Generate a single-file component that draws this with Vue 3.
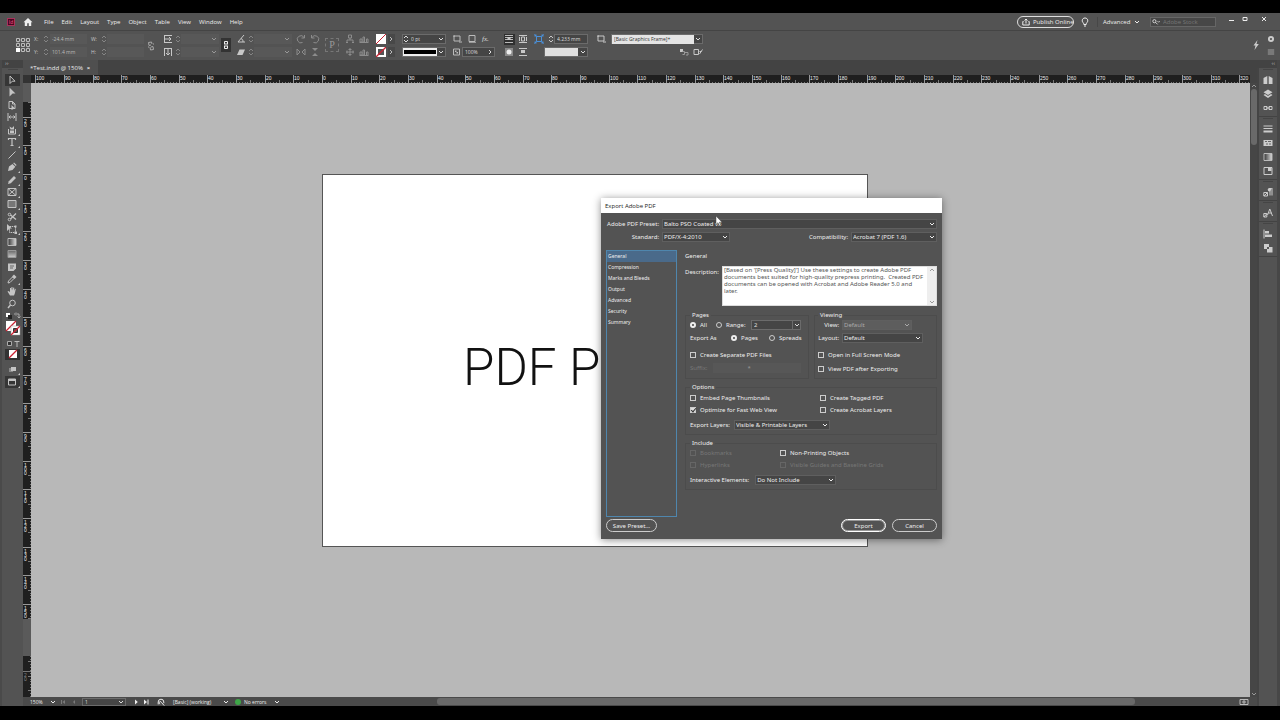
<script setup>
import { ref } from 'vue'

const menus = ['File', 'Edit', 'Layout', 'Type', 'Object', 'Table', 'View', 'Window', 'Help']

const tools = [
  { id: 'select', active: true }, { id: 'direct' }, { id: 'page' }, { id: 'gap' },
  { id: 'collect', more: true }, { id: 'type', more: true }, { id: 'line' }, { id: 'pen', more: true },
  { id: 'pencil', more: true }, { id: 'frame', more: true }, { id: 'rect', more: true }, { id: 'scissors' },
  { id: 'transform', more: true }, { id: 'gradient' }, { id: 'feather' }, { id: 'note' },
  { id: 'dropper', more: true }, { id: 'hand' }, { id: 'zoom' }
]

const panelGroups = [
  ['pages', 'layers', 'links'],
  ['strokes', 'swatches', 'gradient', 'cclib'],
  ['parastyle'],
  ['charstyle'],
  ['align', 'pathfinder']
]

const STEP = 28.67
const hMarks = Array.from({ length: 43 }, (_, i) => ({ x: Math.round(291 + (i - 10) * STEP), n: Math.abs(i - 10) * 10 }))
const hTicks = Array.from({ length: 430 }, (_, i) => Math.round(291 - 10 * STEP + (i * STEP) / 10))
const vMarks = Array.from({ length: 18 }, (_, i) => ({ y: Math.round(91 + (i - 2) * STEP), d: String(Math.abs(i - 2) * 10).split('') }))
const vTicks = Array.from({ length: 220 }, (_, i) => Math.round(91 - 2.5 * STEP + (i * STEP) / 10))

const sections = ['General', 'Compression', 'Marks and Bleeds', 'Output', 'Advanced', 'Security', 'Summary']
const section = ref('General')
const description = ref(
  "[Based on '[Press Quality]'] Use these settings to create Adobe PDF\ndocuments best suited for high-quality prepress printing.  Created PDF\ndocuments can be opened with Acrobat and Adobe Reader 5.0 and\nlater."
)
</script>

<template>
  <div class="app">
    <svg class="defs" aria-hidden="true">
      <symbol id="chev" viewBox="0 0 6 6"><path d="M1 2l2 2 2-2" fill="none" stroke="currentColor" /></symbol>
      <symbol id="chevr" viewBox="0 0 6 6"><path d="M2 1l2 2-2 2" fill="none" stroke="currentColor" /></symbol>
      <symbol id="spin" viewBox="0 0 6 10"><path d="M1 4l2-2 2 2M1 6l2 2 2-2" fill="none" stroke="currentColor" /></symbol>
      <symbol id="home" viewBox="0 0 10 10"><path d="M5 1L.5 5.2h1.3V9h2.4V6.3h1.6V9h2.4V5.2h1.3z" fill="currentColor" /></symbol>
      <symbol id="select" viewBox="0 0 10 10"><path d="M3 1l5 5.2H5.3L3 8.5z" fill="none" stroke="currentColor" /></symbol>
      <symbol id="direct" viewBox="0 0 10 10"><path d="M2.5.5l6 6H5.6L2.5 9.5z" fill="currentColor" /></symbol>
      <symbol id="page" viewBox="0 0 10 10"><path d="M2 1.5h3.5L8 4v4.5H2zM5.5 1.5V4H8" fill="none" stroke="currentColor" /><path d="M4.5 5l4 4h-2L4.5 10z" fill="currentColor" /></symbol>
      <symbol id="gap" viewBox="0 0 10 10"><path d="M1 1v8M9 1v8M2 5h6M3.5 3.5L2 5l1.5 1.5M6.5 3.5L8 5 6.5 6.5" fill="none" stroke="currentColor" /></symbol>
      <symbol id="collect" viewBox="0 0 10 10"><path d="M1.5 4v5h7V4" fill="none" stroke="currentColor" /><path d="M3 5.5h4V8H3zM2.5 1.5L5 3l2-2v3.5H3.5z" fill="currentColor" /></symbol>
      <symbol id="type" viewBox="0 0 10 10"><path d="M1.5 3V1.5h7V3M5 1.5v7M3.5 8.5h3" fill="none" stroke="currentColor" stroke-width="1.2" /></symbol>
      <symbol id="line" viewBox="0 0 10 10"><path d="M1.5 8.5l7-7" stroke="currentColor" /></symbol>
      <symbol id="pen" viewBox="0 0 10 10"><path d="M1 9l1-4.5L5.5 2l2.8 2.8L5.5 8zM6.2 1.3l.8-.8L9.6 3l-.8.9z" fill="currentColor" /></symbol>
      <symbol id="pencil" viewBox="0 0 10 10"><path d="M1 9l.8-2.8L7 1l2 2-5.2 5.2z" fill="currentColor" /></symbol>
      <symbol id="frame" viewBox="0 0 10 10"><path d="M1 1.5h8v7H1zM1 1.5l8 7M9 1.5l-8 7" fill="none" stroke="currentColor" /></symbol>
      <symbol id="rect" viewBox="0 0 10 10"><path d="M1 1.5h8v7H1z" fill="#777" stroke="currentColor" /></symbol>
      <symbol id="scissors" viewBox="0 0 10 10"><path d="M9 1.5L3.5 7M9 7.5L3.5 3" stroke="currentColor" stroke-width="1.3" /><g fill="none" stroke="currentColor"><circle cx="2.5" cy="2.5" r="1.3" /><circle cx="2.5" cy="7.5" r="1.3" /></g></symbol>
      <symbol id="transform" viewBox="0 0 10 10"><path d="M2.5 2.5h6v6h-6z" fill="none" stroke="currentColor" stroke-dasharray="1.5 .7" /><path d="M0 0l5 4.5H2.8L0 7zM7.5 7.5h2.5V10H7.5zM7.5 1.5h2v2h-2z" fill="currentColor" /></symbol>
      <linearGradient id="lg"><stop offset="0" stop-color="#333" /><stop offset="1" stop-color="#ddd" /></linearGradient>
      <linearGradient id="lv" x2="0" y2="1"><stop offset="0" stop-color="#666" /><stop offset="1" stop-color="#ccc" /></linearGradient>
      <symbol id="gradient" viewBox="0 0 10 10"><path d="M1 1.5h8v7H1z" fill="url(#lg)" stroke="#bbb" /></symbol>
      <symbol id="feather" viewBox="0 0 10 10"><path d="M1 1.5h8v7H1z" fill="url(#lv)" stroke="#999" /></symbol>
      <symbol id="note" viewBox="0 0 10 10"><path d="M1 1.5h8v5L6.5 9H1z" fill="currentColor" /><path d="M3 4h4M3 6h3" stroke="#666" /></symbol>
      <symbol id="dropper" viewBox="0 0 10 10"><path d="M1 9l.5-2 4-4L7 4.5l-4 4z" fill="none" stroke="currentColor" /><path d="M5 2.500l2-2L9.500 3l-2 2z" fill="currentColor" /></symbol>
      <symbol id="hand" viewBox="0 0 10 10"><path d="M3 9.5L.5 5.500l1-.5L3 6V2h1v2.500L4.500 1h1v3.500l.8-3 1 .2-.3 3 1-2 .8.400-1 4.400L7 9.500z" fill="currentColor" /></symbol>
      <symbol id="zoom" viewBox="0 0 10 10"><circle cx="5.5" cy="4" r="2.8" fill="none" stroke="currentColor" /><path d="M3.5 6L1 9" stroke="currentColor" stroke-width="1.4" /></symbol>
      <symbol id="pages" viewBox="0 0 10 10"><path d="M.5 3l3.8-2v8H.5zM9.5 3L5.700 1v8h3.800z" fill="currentColor" /></symbol>
      <symbol id="layers" viewBox="0 0 10 10"><path d="M5 .5l4.500 2.700L5 6 .5 3.200zM.5 6L2 5l3 2 3-2 1.500 1L5 9z" fill="currentColor" /></symbol>
      <symbol id="links" viewBox="0 0 10 10"><path d="M1 3.500h3v3H1zM6 3.500h3v3H6zM3 5h4" fill="none" stroke="currentColor" /></symbol>
      <symbol id="strokes" viewBox="0 0 10 10"><path d="M.5 2h9M.5 4.500h9" stroke="currentColor" /><path d="M.5 7.500h9" stroke="currentColor" stroke-width="2" /></symbol>
      <symbol id="swatches" viewBox="0 0 10 10"><path d="M.5 2h9v6h-9z" fill="currentColor" /><path d="M2 3.500h2M5 3.500h3M3 6h2M6 6h2" stroke="#666" /></symbol>
      <symbol id="cclib" viewBox="0 0 10 10"><path d="M1 1.500h8v7H1z" fill="none" stroke="currentColor" /><path d="M5 1.500h3.500V5H5z" fill="currentColor" /></symbol>
      <symbol id="parastyle" viewBox="0 0 10 10"><path d="M9 1H6.500a1.800 1.800 0 000 3.600H7z" fill="currentColor" /><path d="M7 1v7.500M9 1v7.500M.8 5.500h3.700v3.500H.8zM1 9l3.500-3.500" fill="none" stroke="currentColor" /></symbol>
      <symbol id="charstyle" viewBox="0 0 10 10"><path d="M4.500 7L6.800 1 9.500 8M5.500 5h3M.8 5.500h3v3.500h-3zM1 9l3-3.500" fill="none" stroke="currentColor" /></symbol>
      <symbol id="align" viewBox="0 0 10 10"><path d="M1 .5v9" stroke="currentColor" /><path d="M2 2h4v2.500H2zM2 5.500h7V8H2z" fill="currentColor" /></symbol>
      <symbol id="pathfinder" viewBox="0 0 10 10"><path d="M1 1h5v5H1zM4 4h5.500v5.500H4z" fill="currentColor" /><path d="M4 4h2v2H4z" fill="#555" /></symbol>
      <symbol id="rot" viewBox="0 0 10 10"><path d="M6.500 8.500A3.600 3.600 0 118 3.500M8.500 1v3h-3" fill="none" stroke="currentColor" /></symbol>
      <symbol id="flip" viewBox="0 0 10 10"><path d="M1 2l3 3-3 3zM9 2v6L6 5z" fill="none" stroke="currentColor" /></symbol>
      <symbol id="flipv" viewBox="0 0 10 10"><path d="M2 1h6L5 4zM2 9h6L5 6z" fill="currentColor" /></symbol>
      <symbol id="chain" viewBox="0 0 10 10"><path d="M3.500 4.500V1.500h3v3M3.500 5.500v3h3v-3M5 3v4" fill="none" stroke="currentColor" /></symbol>
      <symbol id="unchain" viewBox="0 0 10 10"><path d="M5 4L3 4.500 2.500 1.500l3-.5.5 2M4 6l.5 3 3-.5L7 5.500 5 6M2 6h1M7 3h1" fill="none" stroke="currentColor" /></symbol>
      <symbol id="scalex" viewBox="0 0 10 10"><path d="M1 1.500h8M1 8.500h8M1.500 1v8M2 5h6M6 3l2 2-2 2" fill="none" stroke="currentColor" /></symbol>
      <symbol id="scaley" viewBox="0 0 10 10"><path d="M1.500 1v8M8.500 1v8M1 1.500h8M5 2v6M3 6l2 2 2-2" fill="none" stroke="currentColor" /></symbol>
      <symbol id="angle" viewBox="0 0 10 10"><path d="M8 1L2 8h7M5 4.500c2 1 2 2 2 3.500" fill="none" stroke="currentColor" /></symbol>
      <symbol id="shear" viewBox="0 0 10 10"><path d="M3.500 2.500H9L6.500 8H1z" fill="currentColor" /></symbol>
      <symbol id="tree" viewBox="0 0 10 10"><path d="M3.500 1h3v3h-3zM5 4v2M2 8.500V6h6v2.500M1 8.500h2M7 8.500h2" fill="none" stroke="currentColor" /></symbol>
      <symbol id="move" viewBox="0 0 10 10"><path d="M5 1v8M1 5h8M3.500 2.500h3M3.500 7.500h3M2 3.500v3M8 3.500v3" fill="none" stroke="currentColor" /></symbol>
      <symbol id="bars" viewBox="0 0 10 10"><path d="M1 8V5h2v3zM4 8V3h1.500v5zM7.500 8V5h1.500v3M.5 8.500h9" fill="none" stroke="currentColor" /></symbol>
      <symbol id="corner" viewBox="0 0 10 10"><path d="M2 2h6v5H2zM1 2h2M7 8h3" fill="none" stroke="currentColor" /></symbol>
      <symbol id="shadow" viewBox="0 0 10 10"><path d="M2 1.500h6v6H2z" fill="none" stroke="currentColor" /><path d="M2 8.500h7" stroke="#999" /></symbol>
      <symbol id="opacity" viewBox="0 0 10 10"><path d="M1.500 2h6v6h-6z" fill="none" stroke="currentColor" /><path d="M3 3.500h1.500V5H3zM4.500 5H6v1.500H4.500z" fill="currentColor" /></symbol>
      <symbol id="wrap1" viewBox="0 0 10 10"><path d="M1 1.500h8M1 3.500h8M1 5.500h8M1 8.500h8" stroke="currentColor" stroke-width=".9" /><path d="M3.500 3h3v3h-3z" fill="currentColor" /></symbol>
      <symbol id="wrap2" viewBox="0 0 10 10"><path d="M1 1.500h8M1 8.500h8M1.500 3v4M8.500 3v4" stroke="currentColor" /><path d="M3.500 3h3v4h-3z" fill="none" stroke="currentColor" /></symbol>
      <symbol id="wrap3" viewBox="0 0 10 10"><path d="M1 1h8v8H1z" fill="#8a8a8a" /><circle cx="5" cy="5" r="2.5" fill="#eee" /></symbol>
      <symbol id="wrap4" viewBox="0 0 10 10"><path d="M1 1.500h8M1 8.500h8" stroke="currentColor" /><path d="M3 3h4v3H3z" fill="currentColor" /></symbol>
      <symbol id="fit" viewBox="0 0 10 10"><path d="M2.500 2.500h5v5h-5zM.5 .5l2 2M9.500.5l-2 2M.5 9.500l2-2M9.500 9.500l-2-2" fill="none" stroke="#4a90d9" /><path d="M.5.5h2v2h-2zM7.500.5h2v2h-2zM.5 7.500h2v2h-2zM7.500 7.500h2v2h-2z" fill="#4a90d9" /></symbol>
      <symbol id="clear" viewBox="0 0 10 10"><path d="M1 2h3v3H1z" fill="currentColor" /><path d="M3.500 4.500h2v3h-2M6 5.500h3v2.500H7" fill="none" stroke="#999" /></symbol>
      <symbol id="redefine" viewBox="0 0 10 10"><path d="M1 2.500h4.500v5H1zM6.500 7L9.500 2.500M6.500 4.500h2" fill="none" stroke="currentColor" /></symbol>
      <symbol id="bolt" viewBox="0 0 10 10"><path d="M6.500 0L2.500 5.500h2L3.500 10 7.800 4H5.500z" fill="currentColor" /></symbol>
      <symbol id="gear" viewBox="0 0 10 10"><circle cx="5" cy="5" r="2.6" fill="none" stroke="currentColor" stroke-width="2.4" /></symbol>
      <symbol id="lines" viewBox="0 0 10 10"><path d="M1 2.500h8M1 5h8M1 7.500h8" stroke="currentColor" stroke-width=".8" /></symbol>
      <symbol id="view" viewBox="0 0 10 10"><path d="M2 4h4v4H2z" fill="#888" /><path d="M4 3h5v4H4z" fill="currentColor" /></symbol>
      <symbol id="screen" viewBox="0 0 10 10"><path d="M1.500 2h7v6h-7z" fill="none" stroke="currentColor" /><path d="M1.500 2h7v2h-7z" fill="currentColor" /></symbol>
      <symbol id="triL" viewBox="0 0 6 6"><path d="M4 1v4L2 3z" fill="currentColor" /></symbol>
      <symbol id="triR" viewBox="0 0 6 6"><path d="M2 .5v5L4.800 3z" fill="currentColor" /></symbol>
      <symbol id="first" viewBox="0 0 6 6"><path d="M5 1v4L2.500 3zM1 1h1v4H1z" fill="currentColor" /></symbol>
      <symbol id="last" viewBox="0 0 6 6"><path d="M1 .5v5L4 3zM4.500.5h1v5h-1z" fill="currentColor" /></symbol>
      <symbol id="preflight" viewBox="0 0 10 10"><path d="M1.500 8V5a3.500 3.500 0 017 0v1.500M4 7.500a1.500 1.500 0 111.500-2L9 9.500" fill="none" stroke="currentColor" stroke-width="1.2" /></symbol>
    </svg>

    <header class="menubar">
      <span class="logo">Id</span>
      <button class="bare homebtn" aria-label="Home"><svg class="ic"><use href="#home" /></svg></button>
      <nav class="menus"><button v-for="m in menus" :key="m" class="bare">{{ m }}</button></nav>
      <div class="menuright">
        <button class="publish">
          <svg class="s8" viewBox="0 0 8 8"><path d="M1.500 3.500H.8V7h6.400V3.500h-.7M4 5.500V1M2.500 2.500L4 1l1.500 1.500" fill="none" stroke="currentColor" /></svg>
          Publish Online
        </button>
        <svg class="bulb" viewBox="0 0 8 10"><path d="M2.800 6.500C.2 4.500 1 1 4 1s3.800 3.500 1.200 5.500v1H2.800zM3 9h2" fill="none" stroke="currentColor" /></svg>
        <i class="sep"></i>
        <button class="bare adv">Advanced <svg class="s6"><use href="#chev" /></svg></button>
        <label class="stock">
          <svg class="s8" viewBox="0 0 10 8"><circle cx="3" cy="3" r="2" fill="none" stroke="currentColor" /><path d="M4.500 4.500L7 7M7 3l1.300 1.300L9.600 3" fill="none" stroke="currentColor" /></svg>
          <input placeholder="Adobe Stock" aria-label="Adobe Stock">
        </label>
        <div class="winbtns">
          <button class="bare" aria-label="Minimize"><svg class="s8" viewBox="0 0 8 8"><path d="M2 5.500h5" stroke="currentColor" /></svg></button>
          <button class="bare" aria-label="Restore"><svg class="s8" viewBox="0 0 8 8"><path d="M2 2.500h4v3H2z" fill="none" stroke="currentColor" /></svg></button>
          <button class="bare close" aria-label="Close"><svg class="s8" viewBox="0 0 8 8"><path d="M2 2l4 4M6 2L2 6" stroke="currentColor" /></svg></button>
        </div>
      </div>
    </header>

    <section class="control">
      <div class="grp refp">
        <svg class="refsvg" viewBox="0 0 14 14">
          <path d="M2 2h10v10H2z" fill="none" stroke="#888" />
          <g fill="#535353" stroke="#bbb"><path d="M.5.5h3v3h-3zM5.500.5h3v3h-3zM10.500.5h3v3h-3zM.5 5.500h3v3h-3zM5.500 5.500h3v3h-3zM10.500 5.500h3v3h-3zM5.500 10.500h3v3h-3zM10.500 10.500h3v3h-3z" /></g>
          <path d="M0 10h4v4H0z" fill="#fff" />
        </svg>
      </div>
      <div class="grp xy">
        <label for="fx">X:</label><svg class="sp"><use href="#spin" /></svg><input id="fx" class="flat" value="-24.4 mm">
        <label for="fy">Y:</label><svg class="sp"><use href="#spin" /></svg><input id="fy" class="flat" value="101.4 mm">
      </div>
      <div class="grp xy wh">
        <label for="fw">W:</label><svg class="sp"><use href="#spin" /></svg><input id="fw" class="flat">
        <label for="fh">H:</label><svg class="sp"><use href="#spin" /></svg><input id="fh" class="flat">
      </div>
      <svg class="ic mid"><use href="#unchain" /></svg>
      <div class="grp scale">
        <template v-for="i in ['scalex', 'scaley']" :key="i">
          <svg class="ic"><use :href="'#' + i" /></svg><svg class="sp dim"><use href="#spin" /></svg>
          <span class="combo"><input class="flat" :aria-label="i"><svg class="s6"><use href="#chev" /></svg></span>
        </template>
      </div>
      <button class="linkbtn" aria-label="Constrain proportions"><svg class="ic"><use href="#chain" /></svg></button>
      <div class="grp scale">
        <template v-for="i in ['angle', 'shear']" :key="i">
          <svg class="ic"><use :href="'#' + i" /></svg><svg class="sp dim"><use href="#spin" /></svg>
          <span class="combo"><input class="flat" :aria-label="i"><svg class="s6"><use href="#chev" /></svg></span>
        </template>
      </div>
      <div class="grp pair dimmer">
        <svg class="ic"><use href="#rot" /></svg><svg class="ic mirror"><use href="#rot" /></svg>
        <svg class="ic"><use href="#flip" /></svg><svg class="ic"><use href="#flipv" /></svg>
      </div>
      <span class="pref">P</span>
      <div class="grp pair dimmer">
        <svg class="ic"><use href="#tree" /></svg><svg class="ic"><use href="#bars" /></svg>
        <svg class="ic"><use href="#move" /></svg><svg class="ic"><use href="#bars" /></svg>
      </div>
      <div class="grp swatch">
        <svg class="ic" viewBox="0 0 10 10"><path d="M0 0h10v10H0z" fill="#fff" /><path d="M0 10L10 0" stroke="#c23" /></svg>
        <button class="mini" aria-label="Fill options"><svg class="s6"><use href="#chevr" /></svg></button>
        <svg class="ic" viewBox="0 0 10 10"><path d="M0 0h10v10H0z" fill="#fff" /><path d="M2 2h6v6H2z" fill="#555" /><path d="M0 10L10 0" stroke="#c23" stroke-width="1.3" /></svg>
        <button class="mini" aria-label="Stroke options"><svg class="s6"><use href="#chevr" /></svg></button>
      </div>
      <div class="grp weight">
        <div class="boxed"><svg class="sp"><use href="#spin" /></svg><input value="0 pt" aria-label="Stroke weight"><svg class="s6"><use href="#chev" /></svg></div>
        <div class="boxed"><span class="strokeprev"></span><svg class="s6"><use href="#chev" /></svg></div>
      </div>
      <div class="grp fx">
        <div class="line"><svg class="ic"><use href="#corner" /></svg><svg class="ic"><use href="#shadow" /></svg><em>fx.</em></div>
        <div class="line tight"><svg class="ic"><use href="#opacity" /></svg><div class="boxed pct"><input value="100%" aria-label="Opacity"><svg class="s6"><use href="#chevr" /></svg></div></div>
      </div>
      <div class="grp pair wraps">
        <button class="bare on" aria-label="No text wrap"><svg class="ic"><use href="#wrap1" /></svg></button><svg class="ic"><use href="#wrap2" /></svg>
        <svg class="ic"><use href="#wrap3" /></svg><svg class="ic"><use href="#wrap4" /></svg>
      </div>
      <div class="grp offs">
        <div class="line tight"><svg class="ic"><use href="#fit" /></svg><svg class="sp"><use href="#spin" /></svg><div class="boxed"><input value="4.233 mm" aria-label="Corner size"></div></div>
        <div class="boxed shape"><span class="shapeprev"></span><svg class="s6"><use href="#chev" /></svg></div>
      </div>
      <div class="grp style">
        <div class="line"><svg class="ic"><use href="#corner" /></svg><div class="boxed"><input class="white" value="[Basic Graphics Frame]+" aria-label="Object style"><svg class="s6"><use href="#chev" /></svg></div></div>
        <div class="line end"><svg class="ic"><use href="#clear" /></svg><svg class="ic"><use href="#redefine" /></svg></div>
      </div>
      <div class="ctlright">
        <svg class="ic"><use href="#bolt" /></svg>
        <div class="stack"><svg class="s8"><use href="#gear" /></svg><svg class="s8"><use href="#lines" /></svg></div>
      </div>
    </section>

    <div class="work">
      <aside class="toolbar">
        <div class="collapse">››</div>
        <i class="grip"></i>
        <div class="tools">
          <button v-for="t in tools" :key="t.id" class="bare tool" :class="{ active: t.active, more: t.more }" :aria-label="t.id">
            <svg class="ic"><use :href="'#' + t.id" /></svg>
          </button>
        </div>
        <svg class="fillstroke" viewBox="0 0 18 50">
          <path d="M2 2h4v4H2z" fill="#fff" /><path d="M4 4h4v4H4z" fill="#222" /><path d="M12 3h3v3M12 1.500L10.500 3 12 4.500M13.500 5.500L15 7l1.500-1.500" fill="none" stroke="#aaa" />
          <path d="M2 10h10v10H2z" fill="#fff" /><path d="M2 20L12 10" stroke="#c23" stroke-width="1.2" />
          <path d="M7 15h9v9H7z" fill="#fff" stroke="#999" stroke-width=".5" /><path d="M9.500 17.500h4v4h-4z" fill="#555" stroke="#333" /><path d="M7 24l9-9" stroke="#c23" stroke-width="1.2" />
          <path d="M3.500 30.500h4v4h-4z" fill="#333" stroke="#aaa" /><path d="M10.500 30.500h5M13 30v6" stroke="#bbb" />
          <path d="M1 38h15v11H1z" fill="#333" /><path d="M5 39h8v8H5z" fill="#fff" /><path d="M5 47l8-8" stroke="#c23" stroke-width="1.3" />
        </svg>
        <button class="bare tool more viewopt" aria-label="View options"><svg class="ic"><use href="#view" /></svg></button>
        <button class="bare tool active more" aria-label="Screen mode"><svg class="ic"><use href="#screen" /></svg></button>
      </aside>

      <main class="doc">
        <div class="tabs"><button class="tab">*Test.indd @ 150% <b>×</b></button></div>
        <div class="docgrid">
          <div class="corner"></div>
          <svg class="hruler" aria-hidden="true">
            <path v-for="(x, i) in hTicks" :key="'t' + i" :d="`M${x}.5 ${i % 5 ? 7 : 5}v4`" />
            <template v-for="m in hMarks" :key="m.x"><path class="major" :d="`M${m.x}.5 0v9`" /><text :x="m.x + 1" y="5">{{ m.n }}</text></template>
          </svg>
          <div class="vcap"></div>
          <svg class="vruler" aria-hidden="true">
            <path v-for="(y, i) in vTicks" :key="'v' + i" :d="`M${i % 5 ? 7 : 5} ${y}.5h4`" />
            <template v-for="m in vMarks" :key="m.y"><path class="major" :d="`M0 ${m.y}.5h8`" /><text v-for="(c, k) in m.d" :key="k" x="1" :y="m.y + 6 + k * 4">{{ c }}</text></template>
            <rect class="void" y="0" width="9" height="19" /><rect class="void" y="536" width="9" height="37" />
            <path d="M0 588.500h8" /><text class="ghost" x="1" y="594">2</text><text class="ghost" x="1" y="598">0</text>
          </svg>
          <div class="canvas">
            <div class="paper"><p>PDF P</p></div>

            <form class="dialog" @submit.prevent>
              <h1>Export Adobe PDF</h1>
              <div class="dbody">
                <div class="toprow">
                  <label for="preset">Adobe PDF Preset:</label>
                  <span class="sel wide"><select id="preset"><option>Balto PSO Coated v3</option></select><svg class="s6"><use href="#chev" /></svg></span>
                </div>
                <div class="toprow second">
                  <label for="standard">Standard:</label>
                  <span class="sel std"><select id="standard"><option>PDF/X-4:2010</option></select><svg class="s6"><use href="#chev" /></svg></span>
                  <label for="compat" class="compat">Compatibility:</label>
                  <span class="sel cmp"><select id="compat"><option>Acrobat 7 (PDF 1.6)</option></select><svg class="s6"><use href="#chev" /></svg></span>
                </div>
                <div class="dmain">
                  <div class="sections">
                    <button v-for="s in sections" :key="s" type="button" :class="{ cur: s === section }" @click="section = s">{{ s }}</button>
                  </div>
                  <div class="pane">
                    <h2>General</h2>
                    <div class="desc">
                      <label for="desc">Description:</label>
                      <div class="descbox"><textarea id="desc" v-model="description"></textarea><div class="descbar"><svg class="s6 up"><use href="#chev" /></svg><svg class="s6"><use href="#chev" /></svg></div></div>
                    </div>
                    <div class="cols">
                      <fieldset>
                        <legend>Pages</legend>
                        <div class="row r-range">
                          <label><input type="radio" name="pg" checked>All</label>
                          <label><input type="radio" name="pg">Range:</label>
                          <span class="boxed rng"><input value="2" aria-label="Page range"><span class="drop"><svg class="s6"><use href="#chev" /></svg></span></span>
                        </div>
                        <div class="row g3 r-as">
                          <span>Export As</span>
                          <label><input type="radio" name="as" checked>Pages</label>
                          <label><input type="radio" name="as">Spreads</label>
                        </div>
                        <div class="row g7"><label><input type="checkbox">Create Separate PDF Files</label></div>
                        <div class="row g3 r-suf"><label for="suffix" class="off">Suffix:</label><input id="suffix" class="suffix" disabled value="*"></div>
                      </fieldset>
                      <fieldset class="viewing">
                        <legend>Viewing</legend>
                        <div class="row r-view"><label for="vw">View:</label><span class="sel dis"><select id="vw" disabled><option>Default</option></select><svg class="s6"><use href="#chev" /></svg></span></div>
                        <div class="row g3 r-view"><label for="ly">Layout:</label><span class="sel lay"><select id="ly"><option>Default</option></select><svg class="s6"><use href="#chev" /></svg></span></div>
                        <div class="row g7"><label><input type="checkbox">Open in Full Screen Mode</label></div>
                        <div class="row g4"><label><input type="checkbox">View PDF after Exporting</label></div>
                      </fieldset>
                    </div>
                    <fieldset class="opt">
                      <legend>Options</legend>
                      <div class="row two"><label><input type="checkbox">Embed Page Thumbnails</label><label><input type="checkbox">Create Tagged PDF</label></div>
                      <div class="row g2 two"><label><input type="checkbox" checked>Optimize for Fast Web View</label><label><input type="checkbox">Create Acrobat Layers</label></div>
                      <div class="row g5 sp4"><label for="el">Export Layers:</label><span class="sel elay"><select id="el"><option>Visible &amp; Printable Layers</option></select><svg class="s6"><use href="#chev" /></svg></span></div>
                    </fieldset>
                    <fieldset class="inc">
                      <legend>Include</legend>
                      <div class="row inc2"><label class="off"><input type="checkbox" disabled>Bookmarks</label><label><input type="checkbox">Non-Printing Objects</label></div>
                      <div class="row g2 inc2"><label class="off"><input type="checkbox" disabled>Hyperlinks</label><label class="off"><input type="checkbox" disabled>Visible Guides and Baseline Grids</label></div>
                      <div class="row g5 sp6"><label for="ie">Interactive Elements:</label><span class="sel ielem"><select id="ie"><option>Do Not Include</option></select><svg class="s6"><use href="#chev" /></svg></span></div>
                    </fieldset>
                  </div>
                </div>
                <footer class="actions">
                  <button type="button" class="pill save">Save Preset...</button>
                  <button type="submit" class="pill primary">Export</button>
                  <button type="button" class="pill">Cancel</button>
                </footer>
              </div>
              <svg class="cursor" viewBox="0 0 8 12"><path d="M1 1v8.500l2-1.800 1.200 2.800 1.300-.6-1.200-2.700H7z" fill="#fff" stroke="#444" stroke-width=".5" /></svg>
            </form>
          </div>
          <div class="vscroll"><svg class="s6 up"><use href="#chev" /></svg><i></i><svg class="s6 dn"><use href="#chev" /></svg></div>
        </div>
        <footer class="status">
          <button class="bare zoomlv">150%</button>
          <svg class="s6"><use href="#chev" /></svg>
          <svg class="s6 faint first"><use href="#first" /></svg>
          <svg class="s6 faint prev"><use href="#triL" /></svg>
          <span class="boxed pageno"><input value="1" aria-label="Page"><svg class="s6"><use href="#chev" /></svg></span>
          <svg class="s6 next"><use href="#triR" /></svg>
          <svg class="s6 last"><use href="#last" /></svg>
          <svg class="s8 pre"><use href="#preflight" /></svg>
          <span class="prof">[Basic] (working)</span>
          <svg class="s6"><use href="#chev" /></svg>
          <i class="dot"></i><span class="err">No errors</span>
          <svg class="s6"><use href="#chev" /></svg>
          <div class="hscroll"><i></i></div>
          <svg class="split" viewBox="0 0 10 8"><path d="M1 1.500h8v5H1zM5 1.500v5M3 4h4" fill="none" stroke="currentColor" /></svg>
        </footer>
      </main>

      <aside class="dock">
        <div class="collapse">‹‹</div>
        <div v-for="(g, i) in panelGroups" :key="i" class="dockgrp">
          <i class="grip"></i>
          <button v-for="p in g" :key="p" class="bare" :aria-label="p"><svg class="ic"><use :href="'#' + p" /></svg></button>
        </div>
      </aside>
    </div>
  </div>
</template>

<style>
html, body { margin: 0; background: #000; }
</style>

<style scoped>
.app, .app * { box-sizing: border-box; }
.app { height: 100vh; padding: 13px 0 14px; overflow: hidden; display: flex; flex-direction: column; background: #000; color: #eee; font: 6px/8px "Open Sans", "Noto Sans", sans-serif; }
.defs { position: absolute; width: 0; height: 0; }
button, input, select, textarea { font: inherit; color: inherit; margin: 0; border: 0; padding: 0; border-radius: 0; background: none; outline: 0; min-width: 0; }
svg { display: block; flex: none; }
.ic { width: 10px; height: 10px; }
.s6 { width: 6px; height: 6px; }
.s8 { width: 8px; height: 8px; }
.sp { width: 6px; height: 10px; }
.up { transform: rotate(180deg); }
.mirror { transform: scaleX(-1); }

.menubar { height: 18px; flex: none; display: flex; align-items: center; background: #535353; border-bottom: 1px solid #444; padding-left: 7px; }
.logo { width: 8px; height: 8px; background: #4b0620; border: 1px solid #a8335c; color: #ff5c96; font-size: 5px; line-height: 6px; text-align: center; }
.homebtn { margin-left: 8px; color: #eee; }
.menus { display: flex; gap: 8px; margin-left: 11px; }
.menuright { margin-left: auto; display: flex; align-items: center; }
.publish { display: flex; align-items: center; gap: 3px; width: 57px; height: 12px; border: 1px solid #ddd; border-radius: 6px; padding-left: 4px; white-space: nowrap; }
.bulb { width: 8px; height: 10px; margin-left: 7px; }
.sep { width: 1px; height: 10px; background: #474747; margin: 0 5px 0 8px; }
.adv { display: flex; align-items: center; gap: 4px; width: 47px; }
.stock { width: 66px; height: 10px; display: flex; align-items: center; gap: 3px; border: 1px solid #666; background: #474747; padding-left: 1px; }
.stock input { width: 50px; }
.stock input::placeholder { color: #777; opacity: 1; }
.winbtns { display: flex; gap: 6px; margin: 0 12px 6px 11px; }
.close { margin-left: 5px; }

.control { height: 29px; flex: none; display: flex; background: #535353; padding: 3px 0 0 16px; font-size: 5px; }
.grp { display: grid; grid-template-rows: 10px 10px; row-gap: 3px; align-content: start; align-items: center; color: #c8c8c8; }
.refp { display: block; width: 18px; padding-top: 4px; }
.refsvg { width: 14px; height: 14px; }
.xy { grid-template-columns: 9px 7px 37px; width: 57px; }
.wh { width: 55px; grid-template-columns: 10px 6px 37px; }
.xy .sp, .dim { color: #858585; }
.flat { height: 10px; background: #585858; color: #bbb; padding-left: 2px; width: 100%; }
.mid { margin: 7px 7px 0 0; color: #aaa; }
.scale { grid-template-columns: 12px 6px 38px; width: 58px; }
.combo { position: relative; display: block; }
.combo input { display: block; }
.combo svg { position: absolute; right: 2px; top: 2px; color: #999; }
.linkbtn { width: 10px; height: 14px; margin: 4px 5px 0 0; background: #333; padding: 2px 0; }
.dimmer { color: #8c8c8c; }
.pair { grid-template-columns: 14px 14px; }
.scale + .pair { margin-left: 2px; }
.pref { width: 14px; height: 14px; margin: 4px 6px 0 1px; border: 1px dashed #777; color: #999; font: 10px/12px "Liberation Serif", serif; text-align: center; }
.swatch { grid-template-columns: 12px 8px; margin-left: 3px; }
.mini { width: 7px; height: 10px; background: #484848; color: #bbb; }
.weight { width: 44px; margin-left: 6px; }
.boxed { display: flex; align-items: center; height: 10px; border: 1px solid #6b6b6b; background: #454545; color: #ddd; padding-right: 1px; }
.boxed input { flex: 1; width: 10px; height: 8px; padding-left: 2px; }
.strokeprev { flex: 1; height: 8px; border: 1px solid #eee; border-width: 2px 1px; background: #000; margin-right: 1px; }
.fx { margin-left: 6px; width: 44px; }
.line { display: flex; align-items: center; gap: 5px; }
.tight { gap: 0; }
.fx em { font: italic 7px/10px "Liberation Serif", serif; color: #ddd; }
.fx .ic { color: #bbb; }
.pct { width: 33px; }
.wraps { margin-left: 8px; }
.on { background: #2f2f2f; width: 11px; height: 11px; }
.offs { margin-left: 2px; width: 54px; }
.offs .sp { margin-left: 4px; }
.offs .boxed { flex: 1; }
.shape { margin-left: 10px; }
.shapeprev { flex: 1; height: 8px; background: #e0e0e0; margin-right: 2px; }
.style { margin-left: 8px; width: 107px; }
.style .boxed { flex: 1; }
.style .boxed .white { background: #e4e4e4; color: #333; height: 9px; margin-right: 1px; }
.end { justify-content: flex-end; gap: 4px; }
.ctlright { margin-left: auto; display: flex; gap: 6px; padding-right: 5px; color: #ccc; }
.ctlright > .ic { margin-top: 6px; }
.stack { display: grid; gap: 5px; padding-top: 1px; align-content: start; }

.work { flex: 1; min-height: 0; display: flex; background: #535353; }
.toolbar { width: 23px; flex: none; border-left: 2px solid #4a4a4a; background: #535353; display: flex; flex-direction: column; padding-left: 3px; }
.collapse { height: 8px; background: #434343; margin: 0 0 0 -3px; font-size: 6px; line-height: 6px; padding-left: 3px; color: #bbb; }
.grip { display: block; height: 1px; width: 10px; margin: 1px 3px 2px; background: #454545; }
.tools { display: flex; flex-direction: column; justify-content: space-between; height: 236px; margin-top: 2px; }
.tool { position: relative; width: 15px; height: 12px; padding: 1px 2px; color: #c4c4c4; }
.tool.active { background: #363636; }
.tool.more::after { content: ""; position: absolute; right: 0; bottom: 0; border: 1px solid; border-color: transparent #ccc #ccc transparent; }
.fillstroke { width: 18px; height: 50px; margin: 1px 0 0 -1px; }
.viewopt { margin: 2px 0 1px; }
.doc { flex: 1; min-width: 0; display: flex; flex-direction: column; }
.tabs { height: 15px; flex: none; background: #434343; }
.tab { height: 15px; background: #4f4f4f; padding: 2px 8px 0 7px; font-size: 6px; display: flex; gap: 4px; line-height: 12px; }
.docgrid { flex: 1; min-height: 0; display: grid; grid-template-columns: 8px minmax(0, 1fr) 7px; grid-template-rows: 8px minmax(0, 1fr); }
.corner { background: #333; }
.hruler { width: 100%; height: 8px; background: #1f1f1f; overflow: hidden; }
.hruler path, .vruler path { stroke: #777; fill: none; }
.hruler .major, .vruler .major { stroke: #999; }
.hruler text, .vruler text { fill: #eee; font: 5px "Liberation Sans", sans-serif; }
.vruler .ghost { fill: #888; }
.vcap { background: #434343; }
.vruler { width: 8px; height: 100%; background: #1f1f1f; overflow: hidden; }
.vruler .void { fill: #5a5a5a; }
.canvas { position: relative; overflow: hidden; background: #b8b8b8; }
.paper { position: absolute; left: 291px; top: 91px; width: 546px; height: 373px; background: #fff; border: 1px solid #555; }
.paper p { margin: 0; padding: 159px 0 0 140px; color: #111; font: 300 51px/68px Roboto, sans-serif; }
.vscroll { background: #464646; display: flex; flex-direction: column; align-items: center; color: #999; }
.vscroll i { width: 6px; height: 56px; border-radius: 3px; background: #696969; }
.dn { margin-top: auto; }
.status { height: 9px; flex: none; background: #4a4a4a; display: flex; align-items: center; font-size: 5px; line-height: 8px; }
.zoomlv { margin-left: 7px; width: 20px; text-align: left; }
.faint { color: #7a7a7a; }
.first { margin-left: 4px; }
.prev { margin: 0 5px; }
.pageno { width: 44px; height: 8px; }
.next { margin: 0 4px 0 7px; }
.pre { margin: 0 8px 0 8px; }
.prof { width: 50px; white-space: nowrap; }
.dot { width: 6px; height: 6px; border-radius: 3px; background: #3ea648; margin: 0 3px 0 6px; }
.err { width: 30px; white-space: nowrap; }
.hscroll { flex: 1; height: 8px; margin-left: 157px; }
.hscroll i { display: block; width: 87%; height: 7px; border-radius: 3px; background: #696969; }
.split { width: 10px; height: 8px; color: #bbb; margin-right: 8px; }
.dock { width: 23px; flex: none; background: #535353; border-left: 2px solid #444; border-right: 3px solid #474747; }
.dock .collapse { text-align: right; padding-right: 2px; }
.dockgrp { border-bottom: 1px solid #434343; padding-bottom: 3px; display: flex; flex-direction: column; align-items: center; gap: 4px; color: #ccc; }
.dockgrp .grip { margin-bottom: 1px; }

.dialog { position: absolute; left: 570px; top: 115px; width: 341px; background: #535353; box-shadow: 0 1px 8px rgba(0, 0, 0, .45); color: #eee; font: 6px/8px "Noto Sans", sans-serif; }
.dialog h1 { margin: 0; height: 15px; background: #fff; color: #222; font: 6px/16px "Open Sans", sans-serif; padding-left: 4px; }
.dbody { padding: 6px 5px 7px; }
.toprow { display: flex; align-items: center; height: 10px; }
.toprow label:first-child { width: 53px; text-align: right; margin-right: 3px; white-space: nowrap; }
.second { margin-top: 3px; }
.compat { margin: 0 3px 0 auto; }
.sel { position: relative; display: block; height: 10px; }
.sel select { display: block; appearance: none; width: 100%; height: 10px; background: #454545; border: 1px solid #5f5f5f; padding: 0 8px 0 1px; line-height: 8px; }
.sel svg { position: absolute; right: 2px; top: 2px; }
.wide { flex: 1; }
.std { width: 68px; }
.cmp { width: 86px; }
.dmain { display: flex; margin-top: 8px; }
.sections { width: 71px; border: 1px solid #4f86ad; display: flex; flex-direction: column; font-size: 5px; }
.sections button { height: 11px; text-align: left; padding: 0 0 2px 1px; }
.sections .cur { background: #4a6a8a; }
.pane { flex: 1; margin-left: 8px; min-height: 267px; }
.pane h2 { margin: 2px 0 6px; font: inherit; }
.desc { display: flex; }
.desc label { width: 37px; padding-top: 2px; white-space: nowrap; }
.descbox { flex: 1; height: 40px; display: flex; background: #fff; border: 1px solid #ddd; }
.descbox textarea { flex: 1; resize: none; overflow: hidden; color: #555; white-space: pre; line-height: 7px; padding-left: 1px; }
.descbar { width: 9px; background: #eee; color: #999; display: flex; flex-direction: column; justify-content: space-between; align-items: center; }
.cols { display: grid; grid-template-columns: 124px 123px; justify-content: space-between; margin-top: 5px; }
fieldset { margin: 0; border: 1px solid #4c4c4c; padding: 1px 4px 4px; min-width: 0; }
legend { padding: 0 2px; margin-left: 0; height: 8px; }
.row { display: flex; align-items: center; height: 10px; white-space: nowrap; }
.row label { display: flex; align-items: center; }
.g2 { margin-top: 2px; }
.g3 { margin-top: 3px; }
.g4 { margin-top: 4px; }
.g5 { margin-top: 5px; }
.g7 { margin-top: 7px; }
.off { color: #777; }
input[type="checkbox"] { appearance: none; width: 6px; height: 6px; border: 1px solid #ccc; margin-right: 4px; position: relative; }
input[type="checkbox"]:checked { background: #ddd; }
input[type="checkbox"]:checked::after { content: ""; position: absolute; left: 1px; top: -1px; width: 2px; height: 4px; border: solid #333; border-width: 0 1px 1px 0; transform: rotate(40deg); }
input[type="checkbox"]:disabled { border-color: #666; }
input[type="radio"] { appearance: none; width: 6px; height: 6px; border: 1px solid #ccc; border-radius: 50%; margin-right: 4px; }
input[type="radio"]:checked { border: 2px solid #eee; background: #444; }
.r-range { display: grid; grid-template-columns: 26px 35px 50px; }
.r-as { display: grid; grid-template-columns: 41px 38px 35px; }
.rng { padding-right: 0; }
.drop { border-left: 1px solid #6b6b6b; padding-left: 1px; height: 8px; width: 8px; display: flex; align-items: center; }
.r-suf { gap: 6px; }
.suffix { width: 88px; height: 10px; background: #575757; color: #999; padding-left: 34px; }
.viewing { padding-left: 3px; }
.r-view label { width: 21px; margin-right: 3px; justify-content: flex-end; }
.dis { width: 70px; color: #aaa; }
.dis select { background: #5d5d5d; opacity: 1; }
.lay { width: 81px; }
.opt, .inc { margin-top: 4px; }
.opt { padding-top: 2px; }
.two { display: grid; grid-template-columns: 130px 1fr; }
.inc2 { display: grid; grid-template-columns: 90px 1fr; }
.sp4 { gap: 4px; }
.sp6 { gap: 6px; }
.elay { width: 96px; }
.ielem { width: 81px; }
.actions { display: flex; gap: 6px; margin-top: 2px; }
.pill { width: 45px; height: 13px; border: 1px solid #ccc; border-radius: 7px; }
.save { width: 51px; margin-right: auto; }
.primary { border: 1px solid #fff; box-shadow: 0 0 0 1px #999 inset; }
.cursor { position: absolute; left: 114px; top: 17px; width: 8px; height: 12px; }
</style>
